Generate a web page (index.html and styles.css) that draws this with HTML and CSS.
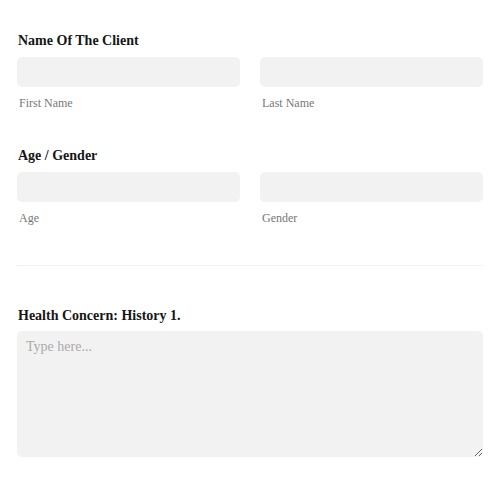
FILE: index.html
```html
<!DOCTYPE html>
<html>
<head>
<meta charset="utf-8">
<link rel="stylesheet" href="styles.css">
</head>
<body>
<form class="form">
  <div class="field">
    <div class="heading">Name Of The Client</div>
    <div class="row">
      <div class="col">
        <input class="input" type="text">
        <div class="sub">First Name</div>
      </div>
      <div class="col">
        <input class="input" type="text">
        <div class="sub">Last Name</div>
      </div>
    </div>
  </div>
  <div class="field second">
    <div class="heading">Age / Gender</div>
    <div class="row">
      <div class="col">
        <input class="input" type="text">
        <div class="sub">Age</div>
      </div>
      <div class="col">
        <input class="input" type="text">
        <div class="sub">Gender</div>
      </div>
    </div>
  </div>
  <hr class="divider">
  <div class="field">
    <div class="heading last">Health Concern: History 1.</div>
    <textarea class="textarea" placeholder="Type here..."></textarea>
  </div>
</form>
</body>
</html>
```
FILE: styles.css
```css
html, body {
  margin: 0;
  padding: 0;
  background: #ffffff;
}
body {
  font-family: "Liberation Serif", "DejaVu Serif", serif;
  color: #111;
}
.form {
  padding: 30px 17px 0 17px;
}
.heading {
  font-weight: bold;
  font-size: 14px;
  line-height: 20px;
  padding-top: 1px;
  margin-bottom: 6px;
  color: #161616;
  padding-left: 1px;
}
.heading.last {
  padding-top: 2px;
  margin-bottom: 5px;
}
.row {
  display: grid;
  grid-template-columns: 1fr 1fr;
  column-gap: 20px;
}
.col {
  display: flex;
  flex-direction: column;
}
.input {
  box-sizing: border-box;
  height: 30px;
  width: 100%;
  border: none;
  border-radius: 5px;
  background: #f2f2f2;
  margin: 0;
  padding: 0 8px;
  outline: none;
}
.sub {
  margin-top: 7px;
  font-size: 12px;
  line-height: 18px;
  color: #777;
  padding-left: 2px;
}
.second {
  margin-top: 33px;
}
.divider {
  border: none;
  border-top: 1px solid #f1f1f1;
  margin: 38px 0 38px 0;
  height: 0;
}
.textarea {
  display: block;
  box-sizing: border-box;
  width: 100%;
  height: 126px;
  border: none;
  border-radius: 5px;
  background: #f2f2f2;
  margin: 0;
  padding: 6px 9px;
  font-family: "Liberation Serif", "DejaVu Serif", serif;
  font-size: 14px;
  line-height: 20px;
  color: #333;
  outline: none;
  resize: vertical;
}
.textarea::placeholder {
  color: #aaa;
}
```
